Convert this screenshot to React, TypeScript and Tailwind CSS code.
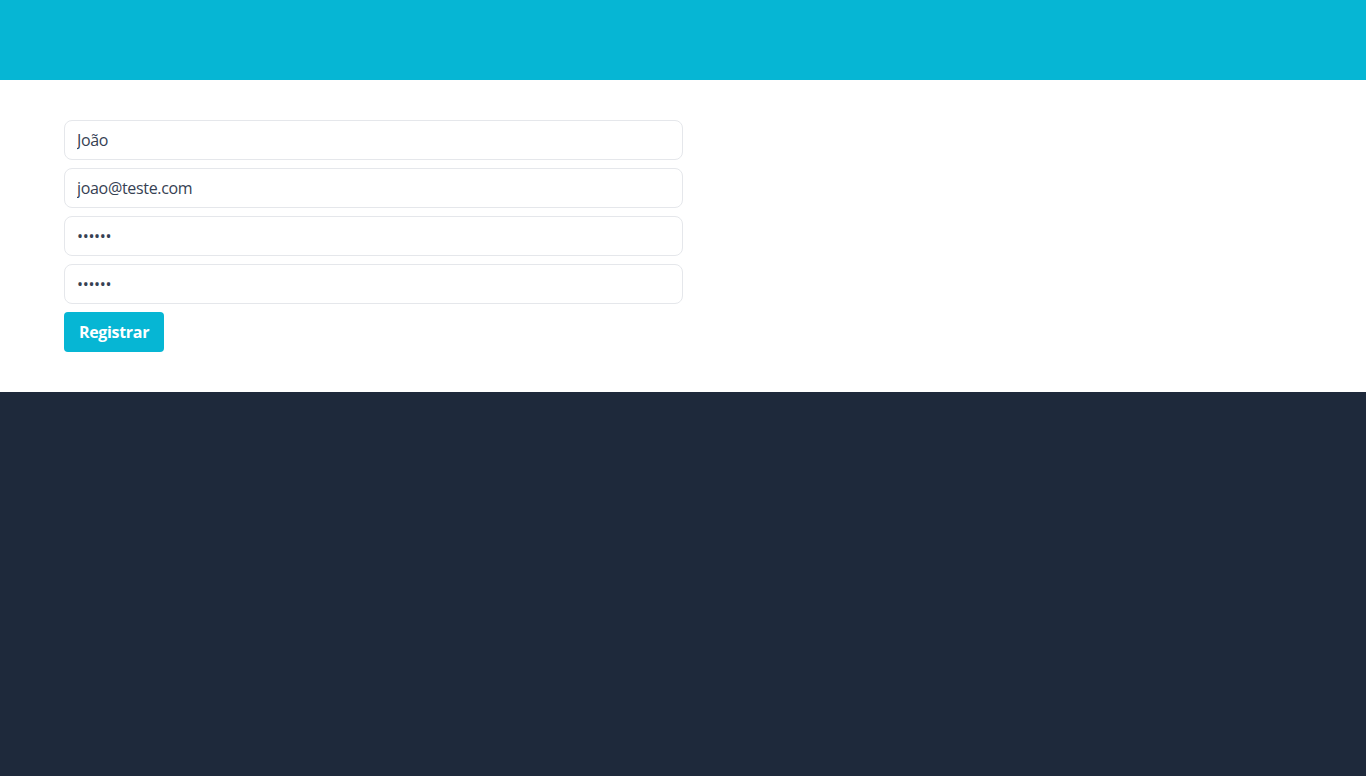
import React from "react";

const inputCls =
  "h-10 rounded-lg border border-gray-200 px-3 text-base tracking-[-0.02em] text-gray-700 outline-none";

export default function App() {
  return (
    <div className="min-h-screen flex flex-col bg-[#1e293b]" style={{ fontFamily: '"Open Sans", "Noto Sans", sans-serif' }}>
      <header className="h-20 bg-[#06b6d4]" />
      <main className="bg-white px-16 py-10">
        <form className="w-1/2 flex flex-col gap-2" onSubmit={(e) => e.preventDefault()}>
          <input type="text" defaultValue="João" className={inputCls} />
          <input type="email" defaultValue="joao@teste.com" className={inputCls} />
          <input type="password" defaultValue="123456" className={inputCls} />
          <input type="password" defaultValue="123456" className={inputCls} />
          <div>
            <button
              type="submit"
              className="h-10 w-[100px] rounded bg-[#06b6d4] text-base font-bold tracking-[-0.02em] text-white"
            >
              Registrar
            </button>
          </div>
        </form>
      </main>
      <footer className="flex-1 bg-[#1e293b]" />
    </div>
  );
}
